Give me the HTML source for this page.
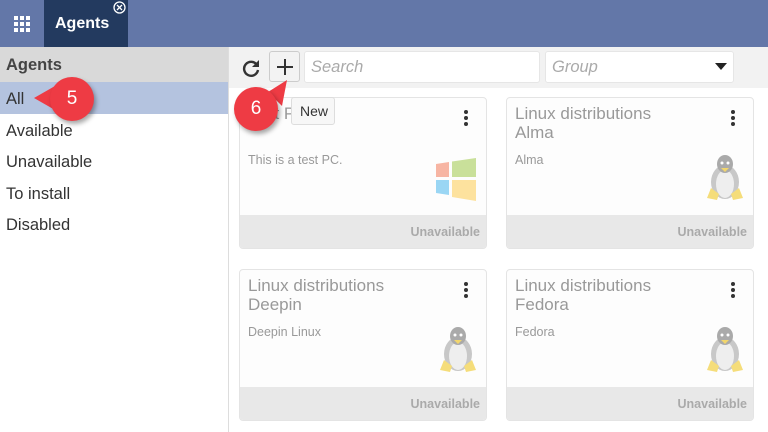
<!DOCTYPE html>
<html><head><style>
*{box-sizing:border-box;margin:0;padding:0}
body{width:768px;height:432px;overflow:hidden;font-family:"Liberation Sans",sans-serif;background:#fff;position:relative}
.top{position:absolute;left:0;top:0;width:768px;height:47px;background:#6377a8}
.tab{position:absolute;left:44px;top:0;width:84px;height:47px;background:#233a5f;color:#fff;font-weight:bold;font-size:16px;padding:15px 0 0 11px}
.side{position:absolute;left:0;top:47px;width:229px;height:385px;border-right:1px solid #ddd;background:#fff}
.side div{height:31.5px;font-size:16.5px;color:#333;padding:8px 0 0 6px}
.side .h{background:#d9d9d9;height:35px;font-weight:bold;color:#444;padding-top:9px}
.side .sel{background:#b4c3df}
.tool{position:absolute;left:229px;top:47px;width:539px;height:41px;background:#f2f2f2}
.inp{position:absolute;top:4px;height:32px;background:#fff;border:1px solid #e6e6e6;border-radius:3px;font-style:italic;color:#aaa;font-size:16.5px;padding:6px 6px}
.card{position:absolute;width:248px;height:152px;border:1px solid #e4e4e4;border-radius:4px;background:#fdfdfd;overflow:hidden}
.card .t{position:absolute;left:8px;top:6px;font-size:17px;color:#999;line-height:19px}
.card .d{position:absolute;left:8px;top:55px;font-size:12.5px;color:#999}
.card .f{position:absolute;left:0;bottom:0;width:100%;height:33px;background:#e8e8e8;text-align:right;font-size:12.5px;font-weight:bold;color:#aaa;padding:10px 6px 0 0}
.dots{position:absolute;right:18px;top:12px;width:4px}
.dots i{display:block;width:4px;height:4px;border-radius:2px;background:#333;margin-bottom:2px}
.ic{position:absolute;right:10px;top:58px}
.pin{position:absolute;width:44px;height:44px;background:#ee3b44;border-radius:50%;color:#fff;font-size:19px;text-align:center;line-height:44px;box-shadow:2px 3px 5px rgba(0,0,0,.35)}
</style></head><body>
<div class="top"></div>
<svg style="position:absolute;left:14px;top:16px" width="16" height="16"><g fill="#fff"><rect x="0" y="0" width="4" height="4"/><rect x="6" y="0" width="4" height="4"/><rect x="12" y="0" width="4" height="4"/><rect x="0" y="6" width="4" height="4"/><rect x="6" y="6" width="4" height="4"/><rect x="12" y="6" width="4" height="4"/><rect x="0" y="12" width="4" height="4"/><rect x="6" y="12" width="4" height="4"/><rect x="12" y="12" width="4" height="4"/></g></svg>
<div class="tab">Agents</div>
<svg style="position:absolute;left:113px;top:1px" width="13" height="13"><circle cx="6.5" cy="6.5" r="5.5" fill="none" stroke="#fff" stroke-width="1.3"/><path d="M4 4L9 9M9 4L4 9" stroke="#fff" stroke-width="1.3"/></svg>
<div class="side"><div class="h">Agents</div><div class="sel">All</div><div>Available</div><div>Unavailable</div><div>To install</div><div>Disabled</div></div>
<div class="tool">
<svg style="position:absolute;left:12px;top:11px" width="20" height="20"><path d="M16 7A7 7 0 1 0 17 12" fill="none" stroke="#333" stroke-width="2.4"/><path d="M18 2V9H11Z" fill="#333"/></svg>
<div style="position:absolute;left:40px;top:4px;width:31px;height:31px;border:1px solid #ccc;border-radius:3px;background:#f3f3f3"></div>
<svg style="position:absolute;left:47px;top:11px" width="18" height="18"><path d="M9 1V17M1 9H17" stroke="#333" stroke-width="2"/></svg>
<div class="inp" style="left:75px;width:236px">Search</div>
<div class="inp" style="left:316px;width:189px">Group</div>
<svg style="position:absolute;left:486px;top:16px" width="12" height="8"><path d="M0 0H12L6 7Z" fill="#222"/></svg>
</div>
<div class="card" style="left:239px;top:97px"><div class="t">Test PC</div><div class="d">This is a test PC.</div><div class="dots"><i></i><i></i><i></i></div>
<svg class="ic" style="right:10px;top:60px" width="40" height="43"><path d="M0 6L13 4V19H0Z" fill="#f7b5a3"/><path d="M16 3.5L40 0V19H16Z" fill="#c9e09a"/><path d="M0 22H13V37L0 35Z" fill="#9ad6f4"/><path d="M16 22H40V43L16 39Z" fill="#fde29e"/></svg>
<div class="f">Unavailable</div></div>
<div style="position:absolute;left:291px;top:97px;width:44px;height:28px;background:#f7f7f7;border:1px solid #ddd;border-radius:3px;font-size:14px;color:#333;padding:5px 0 0 8px">New</div>
<svg width="0" height="0"><defs><g id="tux"><ellipse cx="20" cy="28" rx="14" ry="17" fill="#c8c8c8"/><ellipse cx="20" cy="30" rx="9" ry="14" fill="#eee"/><ellipse cx="20" cy="10" rx="8" ry="9" fill="#aaa"/><circle cx="17" cy="9" r="1.5" fill="#fff"/><circle cx="23" cy="9" r="1.5" fill="#fff"/><path d="M16 14L24 14L20 18Z" fill="#f2d66d"/><path d="M2 44L6 34L14 40L12 46Z" fill="#f5dd7a"/><path d="M38 44L34 34L26 40L28 46Z" fill="#f5dd7a"/></g></defs></svg>
<div class="card" style="left:506px;top:97px"><div class="t">Linux distributions<br>Alma</div><div class="d">Alma</div><div class="dots"><i></i><i></i><i></i></div><svg class="ic" style="right:8px;top:56px" width="40" height="48"><use href="#tux"/></svg><div class="f">Unavailable</div></div>
<div class="card" style="left:239px;top:269px"><div class="t">Linux distributions<br>Deepin</div><div class="d">Deepin Linux</div><div class="dots"><i></i><i></i><i></i></div><svg class="ic" style="right:8px;top:56px" width="40" height="48"><use href="#tux"/></svg><div class="f">Unavailable</div></div>
<div class="card" style="left:506px;top:269px"><div class="t">Linux distributions<br>Fedora</div><div class="d">Fedora</div><div class="dots"><i></i><i></i><i></i></div><svg class="ic" style="right:8px;top:56px" width="40" height="48"><use href="#tux"/></svg><div class="f">Unavailable</div></div>
<svg style="position:absolute;left:32px;top:78px" width="30" height="40"><path d="M2 20L30 4V36Z" fill="#ee3b44"/></svg>
<div class="pin" style="left:50px;top:77px">5</div>
<svg style="position:absolute;left:260px;top:78px" width="30" height="30"><path d="M27 2L8 14L22 28Z" fill="#ee3b44"/></svg>
<div class="pin" style="left:234px;top:87px">6</div>
</body></html>
